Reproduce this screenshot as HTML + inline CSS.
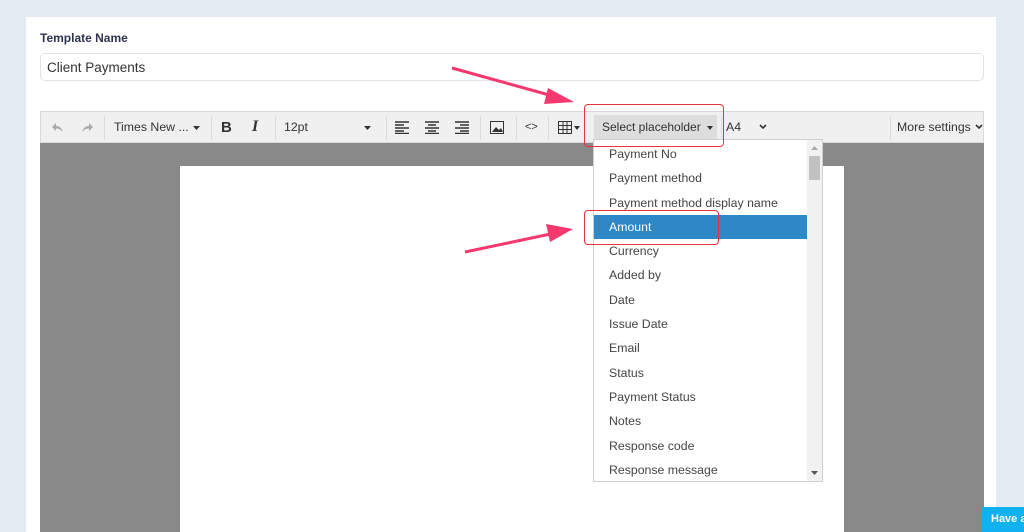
<!DOCTYPE html>
<html><head><meta charset="utf-8"><style>
*{box-sizing:border-box;margin:0;padding:0}
html,body{width:1024px;height:532px;overflow:hidden}
body{background:#e4ebf3;font-family:"Liberation Sans",Arial,sans-serif;position:relative}
.card{position:absolute;left:26px;top:17px;width:970px;height:515px;background:#fff}
.lbl{position:absolute;left:40px;top:31px;font-size:12px;font-weight:bold;color:#2f3350}
.inp{position:absolute;left:40px;top:53px;width:944px;height:28px;border:1px solid #dfe3e8;border-radius:5px;font-size:13.5px;color:#333;padding:6px 6px}
.tb{position:absolute;left:40px;top:111px;width:944px;height:32px;background:#f0f0f0;border:1px solid #d9d9d9}
.tb span{position:absolute;top:8px;font-size:12.3px;color:#333;white-space:nowrap}
.sep{position:absolute;top:4px;width:1px;height:24px;background:#dcdcdc}
.gray{position:absolute;left:40px;top:143px;width:944px;height:389px;background:#898989}
.page{position:absolute;left:180px;top:166px;width:664px;height:366px;background:#fff}
.dd{position:absolute;left:593px;top:139px;width:230px;height:343px;background:#fff;border:1px solid #cfcfcf;overflow:hidden;padding-top:2px}
.it{height:24.3px;line-height:24.3px;padding-left:15px;font-size:12.3px;color:#444;width:213px;white-space:nowrap}
.act{background:#2e88c7;color:#fff}
.sb{position:absolute;right:0;top:0;width:15px;height:100%;background:#f1f1f1}
.red{position:absolute;border:1.5px solid #e8323c;border-radius:4px}
.btn{position:absolute;left:982px;top:507px;width:42px;height:25px;background:#0fb1ee;color:#fff;font-size:11px;font-weight:bold;padding:6px 0 0 9px;white-space:nowrap;overflow:hidden}
</style></head><body>
<div class="card"></div>
<div class="lbl">Template Name</div>
<div class="inp">Client Payments</div>
<div class="tb">
<svg style="position:absolute;left:10px;top:9px" width="14" height="14" viewBox="0 0 14 14"><path d="M5 2L1 6l4 4V7.5c3 0 5 1 7 4-1-4-3-6.5-7-6.5z" fill="#aaa"/></svg>
<svg style="position:absolute;left:39px;top:9px" width="14" height="14" viewBox="0 0 14 14"><path d="M9 2l4 4-4 4V7.5c-3 0-5 1-7 4 1-4 3-6.5 7-6.5z" fill="#aaa"/></svg>
<div class="sep" style="left:63px"></div>
<span style="left:73px">Times New ...</span>
<svg style="position:absolute;left:152px;top:14px" width="7" height="4"><path d="M0 0h7L3.5 4z" fill="#333"/></svg>
<div class="sep" style="left:170px"></div>
<span style="left:180px;font-weight:bold;font-size:15px;top:7px">B</span>
<span style="left:211px;font-weight:bold;font-style:italic;font-family:'Liberation Serif',serif;font-size:16px;top:6px">I</span>
<div class="sep" style="left:234px"></div>
<span style="left:243px">12pt</span>
<svg style="position:absolute;left:323px;top:14px" width="7" height="4"><path d="M0 0h7L3.5 4z" fill="#333"/></svg>
<div class="sep" style="left:345px"></div>
<svg style="position:absolute;left:354px;top:9px" width="14" height="13"><path d="M0 1h14M0 4h9M0 7h14M0 10h9M0 12.5h14" stroke="#333" stroke-width="1.6"/></svg>
<svg style="position:absolute;left:384px;top:9px" width="14" height="13"><path d="M0 1h14M3 4h8M0 7h14M3 10h8M0 12.5h14" stroke="#333" stroke-width="1.6"/></svg>
<svg style="position:absolute;left:414px;top:9px" width="14" height="13"><path d="M0 1h14M5 4h9M0 7h14M5 10h9M0 12.5h14" stroke="#333" stroke-width="1.6"/></svg>
<div class="sep" style="left:439px"></div>
<svg style="position:absolute;left:449px;top:9px" width="14" height="13"><rect x="0.5" y="0.5" width="13" height="12" fill="none" stroke="#333"/><path d="M2 11l4-5 3 3 2-2 2 4z" fill="#333"/></svg>
<div class="sep" style="left:475px"></div>
<span style="left:484px;font-size:11px;top:9px">&lt;&gt;</span>
<div class="sep" style="left:507px"></div>
<svg style="position:absolute;left:517px;top:9px" width="14" height="13"><path d="M.5 .5h13v12H.5zM.5 4.5h13M.5 8.5h13M5 .5v12M9 .5v12" fill="none" stroke="#333"/></svg>
<svg style="position:absolute;left:533px;top:14px" width="6" height="4"><path d="M0 0h6L3 4z" fill="#333"/></svg>
<div style="position:absolute;left:553px;top:3px;width:123px;height:25px;background:#ddd"></div>
<span style="left:561px;font-size:12px">Select placeholder</span>
<svg style="position:absolute;left:666px;top:14px" width="6" height="4"><path d="M0 0h6L3 4z" fill="#333"/></svg>
<div class="sep" style="left:680px"></div>
<span style="left:685px">A4</span>
<svg style="position:absolute;left:718px;top:12px" width="8" height="6"><path d="M1 1l3 3 3-3" fill="none" stroke="#333" stroke-width="1.6"/></svg>
<div class="sep" style="left:849px"></div>
<span style="left:856px">More settings</span>
<svg style="position:absolute;left:934px;top:12px" width="8" height="6"><path d="M1 1l3 3 3-3" fill="none" stroke="#333" stroke-width="1.6"/></svg>
</div>
<div class="gray"></div>
<div class="page"></div>
<div class="dd">
<div class="it">Payment No</div><div class="it">Payment method</div><div class="it">Payment method display name</div><div class="it act">Amount</div><div class="it">Currency</div><div class="it">Added by</div><div class="it">Date</div><div class="it">Issue Date</div><div class="it">Email</div><div class="it">Status</div><div class="it">Payment Status</div><div class="it">Notes</div><div class="it">Response code</div><div class="it">Response message</div>
<div class="sb">
<div style="position:absolute;top:16px;left:2px;width:11px;height:24px;background:#c1c1c1"></div>
<svg style="position:absolute;top:6px;left:4px" width="7" height="4"><path d="M0 4h7L3.5 0z" fill="#aaa"/></svg>
<svg style="position:absolute;bottom:6px;left:4px" width="7" height="4"><path d="M0 0h7L3.5 4z" fill="#555"/></svg>
</div>
</div>
<div class="red" style="left:584px;top:104px;width:140px;height:43px"></div>
<div class="red" style="left:584px;top:210px;width:135px;height:35px"></div>
<svg style="position:absolute;left:0;top:0" width="1024" height="532">
<path d="M452 68L560 98" stroke="#f5386e" stroke-width="3"/><path d="M574 102L548 88L544 104z" fill="#f5386e"/>
<path d="M465 252L560 232" stroke="#f5386e" stroke-width="3"/><path d="M573 229L546 224L550 242z" fill="#f5386e"/>
</svg>
<div class="btn">Have a</div>
</body></html>
